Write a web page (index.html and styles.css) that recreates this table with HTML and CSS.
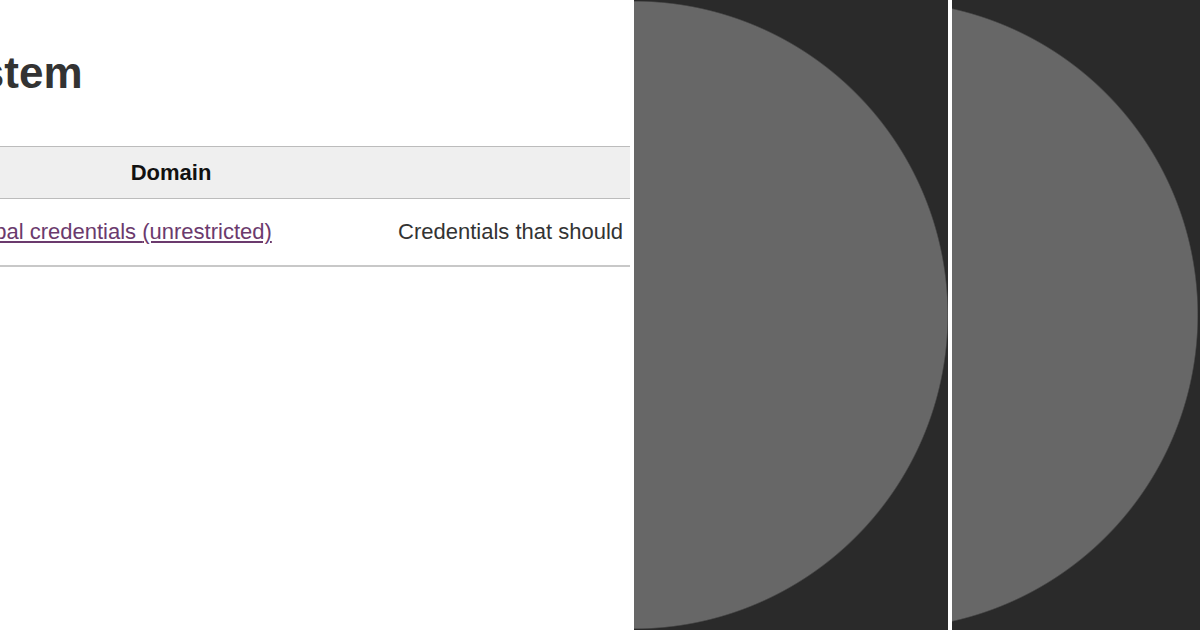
FILE: index.html
```html
<!DOCTYPE html>
<html lang="en">
<head>
<meta charset="utf-8">
<title>System credentials</title>
<link rel="stylesheet" href="styles.css">
</head>
<body>
<div class="page">
  <main class="content">
    <div class="inner">
      <h1 class="title">System</h1>
      <table class="domains">
        <colgroup>
          <col class="col-domain">
          <col class="col-desc">
        </colgroup>
        <thead>
          <tr>
            <th>Domain</th>
            <th>Description</th>
          </tr>
        </thead>
        <tbody>
          <tr>
            <td><a class="domain-link" href="#">Global credentials </a><a class="domain-link" href="#">(unrestricted)</a></td>
            <td>Credentials that should be available irrespective of domain specification to requirements matching.</td>
          </tr>
        </tbody>
      </table>
    </div>
  </main>
  <div class="panel panel-a"></div>
  <div class="panel panel-b"></div>
</div>
</body>
</html>
```

FILE: styles.css
```css
html, body {
  margin: 0;
  padding: 0;
  background: #ffffff;
}

body {
  font-family: "Liberation Sans", Arial, Helvetica, sans-serif;
  color: #333333;
}

.page {
  display: flex;
  gap: 4px;
  width: 1200px;
  height: 630px;
  overflow: hidden;
}

.content {
  width: 630px;
  flex: 0 0 630px;
  overflow: hidden;
}

.inner {
  margin-left: -48px;
  width: 1338px;
}

.title {
  margin: 51px 0 0 -26px;
  font-size: 44px;
  line-height: 44px;
  font-weight: bold;
  color: #333333;
  white-space: nowrap;
}

.domains {
  margin-top: 51px;
  border-collapse: collapse;
  table-layout: fixed;
  width: 1338px;
  font-size: 22px;
  white-space: nowrap;
}

.col-domain {
  width: 438px;
}

.col-desc {
  width: 900px;
}

.domains thead tr {
  background: #efefef;
  border-top: 1px solid #bcbcbc;
  border-bottom: 1px solid #bcbcbc;
}

.domains tbody tr {
  border-bottom: 2px solid #c8c8c8;
}

.domains th {
  height: 51px;
  padding: 0 8px;
  font-weight: bold;
  color: #111111;
  text-align: center;
  vertical-align: middle;
  overflow: hidden;
}

.domains td {
  height: 66px;
  padding: 0 8px;
  vertical-align: middle;
  text-align: left;
  color: #333333;
  overflow: hidden;
}

.domain-link {
  color: #6b3a6d;
  text-decoration: underline;
}

.panel {
  height: 630px;
}

.panel-a {
  flex: 0 0 314px;
  background: radial-gradient(circle 314px at 0 50%, #676767 313px, #2a2a2a 314.5px);
}

.panel-b {
  flex: 1 1 auto;
  background: radial-gradient(circle 314px at -68px 50%, #676767 313px, #2a2a2a 314.5px);
}
```
